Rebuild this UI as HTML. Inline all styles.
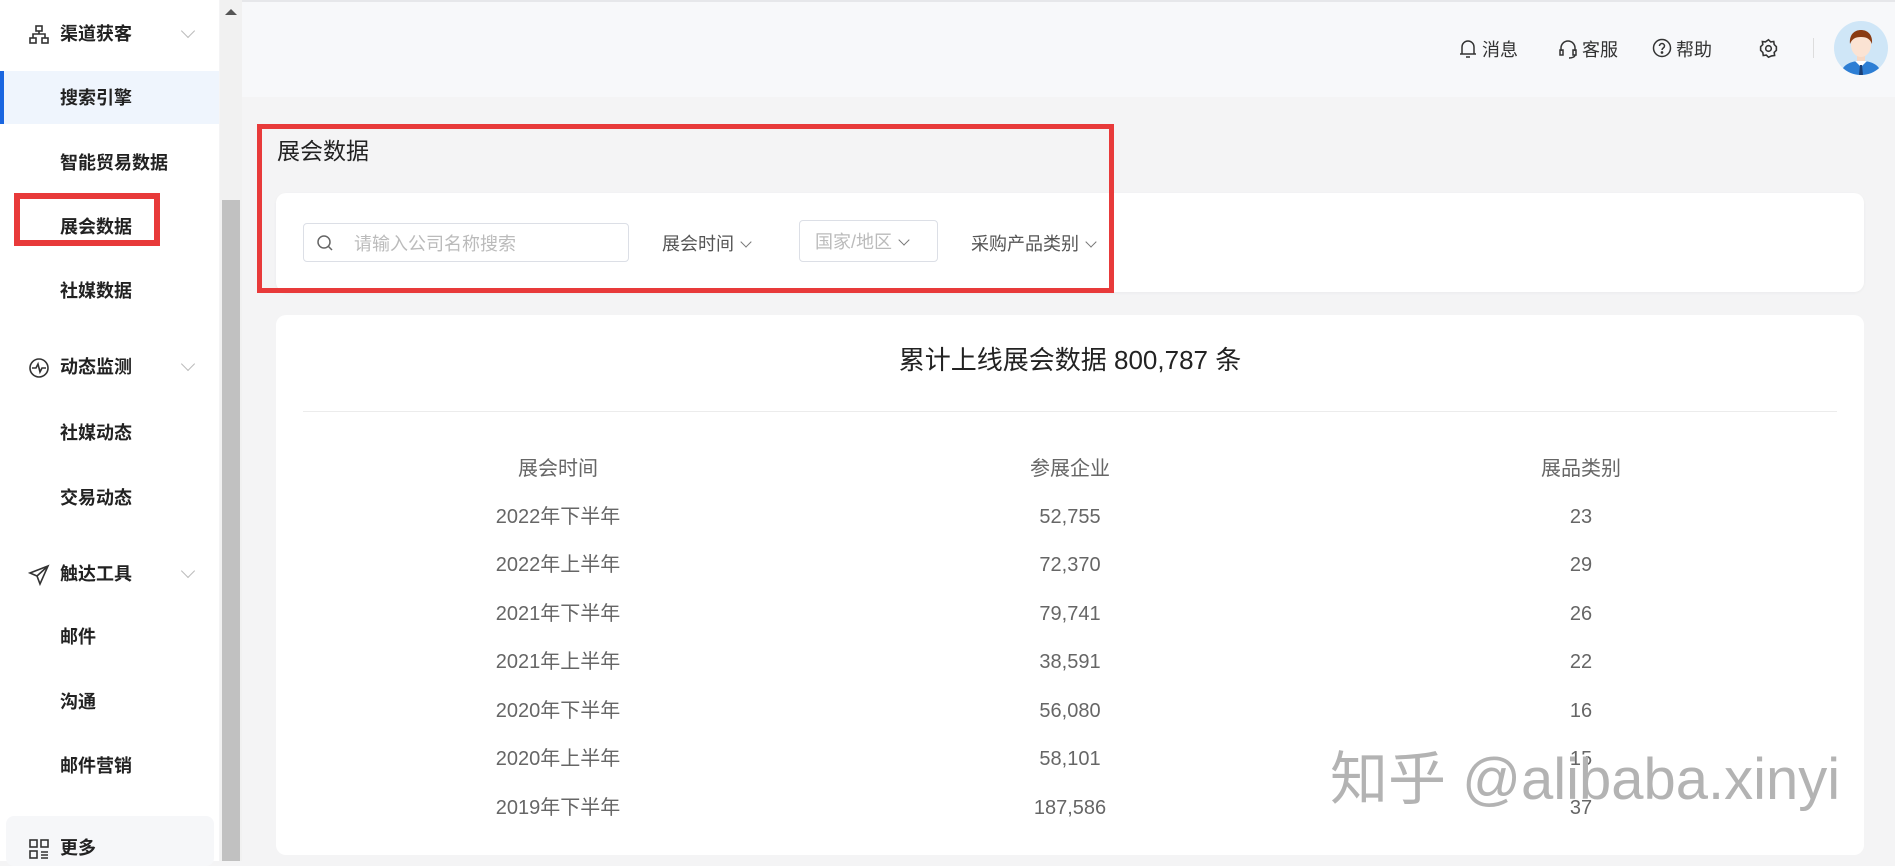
<!DOCTYPE html>
<html><head><meta charset="utf-8"><style>
*{margin:0;padding:0;box-sizing:border-box}
body{width:1895px;height:861px;overflow:hidden;background:#f4f4f5;font-family:"Liberation Sans","Noto Sans CJK SC",sans-serif;position:relative}
.abs{position:absolute}
.side{left:0;top:0;width:219px;height:861px;background:#fff}
.sb{left:220px;top:0;width:22px;height:861px;background:#f1f1f1}
.thumb{left:222px;top:200px;width:18px;height:661px;background:#c1c1c1}
.it{position:absolute;left:60px;font-size:18px;font-weight:bold;color:#222;line-height:24px}
.grp{position:absolute;left:60px;font-size:18px;font-weight:bold;color:#222;line-height:24px}
.chev{position:absolute;left:183px;width:10px;height:10px;border-right:1.5px solid #bbb;border-bottom:1.5px solid #bbb;transform:rotate(45deg)}
.hdr{left:242px;top:0;width:1653px;height:97px;background:#f7f8fa;border-top:2px solid #e6e7ea}
.hi{position:absolute;top:38px;font-size:18px;color:#333;line-height:24px}
.card{background:#fff;border-radius:10px}
.th,.td{position:absolute;font-size:20px;color:#666;width:300px;text-align:center;margin-left:-150px;line-height:24px;height:24px}
.sc{display:inline-block;width:8px;height:8px;border-right:1.5px solid #777;border-bottom:1.5px solid #777;transform:rotate(45deg);margin-left:8px;position:relative;top:-4px}
</style></head><body>
<div class="abs side"></div>
<div class="abs" style="left:0;top:71px;width:219px;height:53px;background:#eff5fd"></div>
<div class="abs" style="left:0;top:71px;width:4px;height:53px;background:#1a66e0"></div>
<svg class="abs" style="left:28px;top:24px" width="22" height="22" viewBox="0 0 22 22" fill="none" stroke="#333" stroke-width="1.6"><rect x="8" y="2" width="6" height="5"/><rect x="2" y="14" width="6" height="5"/><rect x="14" y="14" width="6" height="5"/><path d="M11 7v3M5 14v-4h12v4"/></svg>
<div class="grp" style="top:22px">渠道获客</div><div class="chev" style="top:26px"></div>
<div class="it" style="top:86px">搜索引擎</div>
<div class="it" style="top:151px">智能贸易数据</div>
<div class="it" style="top:215px">展会数据</div>
<div class="abs" style="left:14px;top:193px;width:146px;height:53px;border:6px solid #e83a3a"></div>
<div class="it" style="top:279px">社媒数据</div>
<svg class="abs" style="left:28px;top:357px" width="22" height="22" viewBox="0 0 22 22" fill="none" stroke="#333" stroke-width="1.6"><circle cx="11" cy="11" r="9"/><path d="M4 11h4l2-4 2 8 2-4h4"/></svg>
<div class="grp" style="top:355px">动态监测</div><div class="chev" style="top:359px"></div>
<div class="it" style="top:421px">社媒动态</div>
<div class="it" style="top:486px">交易动态</div>
<svg class="abs" style="left:28px;top:564px" width="22" height="22" viewBox="0 0 22 22" fill="none" stroke="#333" stroke-width="1.6"><path d="M20 2L2 9l7 3 3 8z M9 12l11-10"/></svg>
<div class="grp" style="top:562px">触达工具</div><div class="chev" style="top:566px"></div>
<div class="it" style="top:625px">邮件</div>
<div class="it" style="top:690px">沟通</div>
<div class="it" style="top:754px">邮件营销</div>
<div class="abs" style="left:6px;top:816px;width:208px;height:50px;background:#f6f7f9;border-radius:8px"></div>
<svg class="abs" style="left:28px;top:838px" width="22" height="22" viewBox="0 0 22 22" fill="none" stroke="#333" stroke-width="1.6"><rect x="2" y="2" width="7" height="7"/><rect x="13" y="2" width="7" height="7"/><rect x="2" y="13" width="7" height="7"/><path d="M13 14h7M13 17h7M13 20h7"/></svg>
<div class="grp" style="top:836px">更多</div>
<div class="abs sb"></div><div class="abs thumb"></div>
<div class="abs" style="left:225px;top:9px;width:0;height:0;border-left:6px solid transparent;border-right:6px solid transparent;border-bottom:6px solid #555"></div>
<div class="abs hdr"></div>
<svg class="abs" style="left:1459px;top:39px" width="18" height="20" viewBox="0 0 18 20" fill="none" stroke="#333" stroke-width="1.5"><path d="M3 15V8a6 6 0 0112 0v7zM1 15h16M7 18h4"/></svg>
<div class="hi" style="left:1482px">消息</div>
<svg class="abs" style="left:1558px;top:39px" width="20" height="20" viewBox="0 0 20 20" fill="none" stroke="#333" stroke-width="1.5"><path d="M3 12V9a7 7 0 0114 0v3"/><rect x="2" y="11" width="3" height="5"/><rect x="15" y="11" width="3" height="5"/><path d="M17 16c0 2-3 3-6 3"/></svg>
<div class="hi" style="left:1582px">客服</div>
<svg class="abs" style="left:1652px;top:38px" width="20" height="20" viewBox="0 0 20 20" fill="none" stroke="#333" stroke-width="1.5"><circle cx="10" cy="10" r="8.5"/><path d="M7.5 8a2.5 2.5 0 115 0c0 2-2.5 2-2.5 4"/><circle cx="10" cy="14.5" r=".6" fill="#333"/></svg>
<div class="hi" style="left:1676px">帮助</div>
<svg class="abs" style="left:1758px;top:38px" width="21" height="21" viewBox="0 0 24 24" fill="none" stroke="#333" stroke-width="1.8"><circle cx="12" cy="12" r="3.2"/><path d="M12 2l2.5 2.5 3.5-.5.5 3.5L21 10v4l-2.5 2.5.5 3.5-3.5.5L12 22l-2.5-2.5-3.5.5-.5-3.5L3 14v-4l2.5-2.5L5 4l3.5.5z"/></svg>
<div class="abs" style="left:1813px;top:38px;width:1px;height:20px;background:#ddd"></div>
<svg class="abs" style="left:1834px;top:21px" width="54" height="54" viewBox="0 0 54 54"><circle cx="27" cy="27" r="27" fill="#cfe6f7"/><clipPath id="c"><circle cx="27" cy="27" r="27"/></clipPath><g clip-path="url(#c)"><path d="M6 54c2-10 10-14 21-14s19 4 21 14z" fill="#2d7ed4"/><path d="M21 40l6 6 6-6z" fill="#fff"/><path d="M26 44h2l1 10h-4z" fill="#1b3f75"/><rect x="23" y="32" width="8" height="8" fill="#f7d8c4"/><ellipse cx="27" cy="24" rx="10" ry="12" fill="#fbe3d3"/><path d="M16 23c-1-10 5-14 11-14s12 4 11 14c-2-5-5-7-11-7s-9 2-11 7z" fill="#8a3b12"/></g></svg>
<div class="abs" style="left:257px;top:124px;width:857px;height:169px;border:5px solid #e83a3a;z-index:5"></div>
<div class="abs" style="left:277px;top:132px;font-size:23px;color:#222">展会数据</div>
<div class="abs card" style="left:276px;top:193px;width:1588px;height:99px;box-shadow:0 1px 3px rgba(0,0,0,.04)"></div>
<div class="abs" style="left:303px;top:223px;width:326px;height:39px;border:1px solid #dcdfe6;border-radius:4px;background:#fff"></div>
<svg class="abs" style="left:316px;top:234px" width="18" height="18" viewBox="0 0 18 18" fill="none" stroke="#666" stroke-width="1.5"><circle cx="8" cy="8" r="6"/><path d="M12.5 12.5L16 16"/></svg>
<div class="abs" style="left:354px;top:230px;font-size:18px;color:#bbb">请输入公司名称搜索</div>
<div class="abs" style="left:662px;top:230px;font-size:18px;color:#555">展会时间<span class="sc"></span></div>
<div class="abs" style="left:799px;top:220px;width:139px;height:42px;border:1px solid #dcdfe6;border-radius:4px"></div>
<div class="abs" style="left:815px;top:228px;font-size:18px;color:#bbb">国家/地区<span class="sc"></span></div>
<div class="abs" style="left:971px;top:230px;font-size:18px;color:#555">采购产品类别<span class="sc"></span></div>
<div class="abs card" style="left:276px;top:315px;width:1588px;height:540px"></div>
<div class="abs" style="left:276px;top:340px;width:1588px;text-align:center;font-size:26px;color:#222">累计上线展会数据 800,787 条</div>
<div class="abs" style="left:303px;top:411px;width:1534px;height:1px;background:#ececec"></div>
<div class="th" style="left:558px;top:457px">展会时间</div>
<div class="th" style="left:1070px;top:457px">参展企业</div>
<div class="th" style="left:1581px;top:457px">展品类别</div>
<div class="td" style="left:558px;top:505px">2022年下半年</div><div class="td" style="left:1070px;top:505px">52,755</div><div class="td" style="left:1581px;top:505px">23</div>
<div class="td" style="left:558px;top:553px">2022年上半年</div><div class="td" style="left:1070px;top:553px">72,370</div><div class="td" style="left:1581px;top:553px">29</div>
<div class="td" style="left:558px;top:602px">2021年下半年</div><div class="td" style="left:1070px;top:602px">79,741</div><div class="td" style="left:1581px;top:602px">26</div>
<div class="td" style="left:558px;top:650px">2021年上半年</div><div class="td" style="left:1070px;top:650px">38,591</div><div class="td" style="left:1581px;top:650px">22</div>
<div class="td" style="left:558px;top:699px">2020年下半年</div><div class="td" style="left:1070px;top:699px">56,080</div><div class="td" style="left:1581px;top:699px">16</div>
<div class="td" style="left:558px;top:747px">2020年上半年</div><div class="td" style="left:1070px;top:747px">58,101</div><div class="td" style="left:1581px;top:747px">15</div>
<div class="td" style="left:558px;top:796px">2019年下半年</div><div class="td" style="left:1070px;top:796px">187,586</div><div class="td" style="left:1581px;top:796px">37</div>
<div class="abs" style="left:1330px;top:745px;font-size:58px;color:#b3b3b3;white-space:nowrap;text-shadow:-2px -2px 0 #fff;line-height:70px">知乎 @alibaba.xinyi</div>
</body></html>
